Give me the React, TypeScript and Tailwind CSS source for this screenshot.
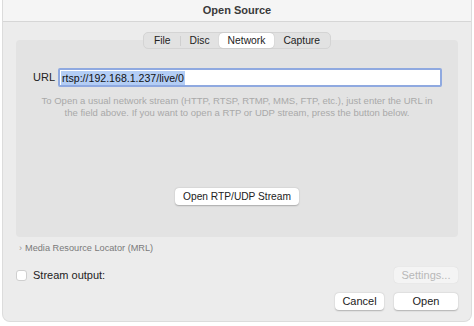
import React, { useState } from 'react';

const font = { fontFamily: '"Liberation Sans", Arial, sans-serif' };

function TabButton({ label, active, onClick }: { label: string; active: boolean; onClick: () => void }) {
  return (
    <button
      onClick={onClick}
      className={
        active
          ? 'h-[15px] px-[9px] rounded-[4px] bg-white text-[10.3px] leading-[15px] text-[#222] shadow-[0_0_1px_rgba(0,0,0,0.3)]'
          : 'h-[15px] px-[9px] text-[10.3px] leading-[15px] text-[#222]'
      }
    >
      {label}
    </button>
  );
}

export default function App() {
  const [tab, setTab] = useState('Network');
  const [url, setUrl] = useState('rtsp://192.168.1.237/live/0');
  const [streamOutput, setStreamOutput] = useState(false);

  return (
    <div className="w-[474px] h-[326px] bg-white" style={font}>
      <div className="mx-[2px] h-[322px] rounded-b-[8px] bg-[#ececec] border border-t-0 border-[#dcdcdc] flex flex-col overflow-hidden">
        {/* title bar */}
        <div className="h-[22px] bg-[#f5f5f5] border-b border-[#d6d6d6] flex items-center justify-center">
          <span className="text-[11px] font-bold text-[#3a3a3a]">Open Source</span>
        </div>

        <div className="relative px-[13px] pt-[18px]">
          {/* segmented tabs */}
          <div className="absolute left-0 right-0 top-[10px] flex justify-center">
            <div className="flex items-center h-[17px] px-px rounded-[5px] bg-[#e2e2e2] border border-[#d4d4d4]">
              {['File', 'Disc', 'Network', 'Capture'].map((t, i) => (
                <React.Fragment key={t}>
                  {i === 1 && <span className="w-px h-[10px] bg-[#cfcfcf]" />}
                  <TabButton label={t} active={tab === t} onClick={() => setTab(t)} />
                </React.Fragment>
              ))}
            </div>
          </div>

          {/* panel */}
          <div className="h-[197px] rounded-[4px] bg-[#e3e3e3] flex flex-col items-center pt-[28px]">
            <div className="flex items-center w-full pl-[17px] pr-[16px]">
              <span className="text-[11px] text-[#222] w-[25px]">URL</span>
              <div className="flex-1 h-[19px] bg-white border-[2px] border-[#8fa9e0] rounded-[2px] flex items-center px-px">
                <span className="text-[10.6px] leading-[14px] text-[#111] bg-[#b3cdf5] px-px">{url}</span>
                <input className="hidden" value={url} onChange={(e) => setUrl(e.target.value)} />
              </div>
            </div>
            <p className="mt-[8px] w-[400px] text-center text-[9.5px] leading-[12px] text-[#a9a9a9]">
              To Open a usual network stream (HTTP, RTSP, RTMP, MMS, FTP, etc.), just enter the URL in the field above. If you want to open a RTP or UDP stream, press the button below.
            </p>
            <button className="mt-[69px] h-[17px] px-[8px] rounded-[4px] bg-white text-[10.2px] leading-[17px] text-[#222] shadow-[0_0.5px_1.5px_rgba(0,0,0,0.25)]">
              Open RTP/UDP Stream
            </button>
          </div>

          {/* MRL disclosure */}
          <div className="mt-[5px] flex items-center gap-[3px] pl-[3px] h-[14px]">
            <span className="text-[9px] text-[#9a9a9a]">›</span>
            <span className="text-[9.2px] text-[#7a7a7a]">Media Resource Locator (MRL)</span>
          </div>

          {/* stream output */}
          <div className="mt-[11px] flex items-center justify-between">
            <label className="flex items-center gap-[6px] cursor-pointer">
              <input
                type="checkbox"
                checked={streamOutput}
                onChange={(e) => setStreamOutput(e.target.checked)}
                className="appearance-none w-[11px] h-[11px] rounded-[3px] bg-white border border-[#cfcfcf]"
              />
              <span className="text-[11px] text-[#222]">Stream output:</span>
            </label>
            <button disabled className="w-[64px] h-[16px] rounded-[4px] bg-[#f4f4f4] text-[11px] leading-[16px] text-[#b8b8b8] shadow-[0_0_1px_rgba(0,0,0,0.15)]">
              Settings...
            </button>
          </div>

          <div className="mt-[9px] flex justify-end gap-[10px]">
            <button className="w-[49px] h-[17px] rounded-[4px] bg-white text-[11px] leading-[17px] text-[#222] shadow-[0_0.5px_1.5px_rgba(0,0,0,0.25)]">
              Cancel
            </button>
            <button className="w-[64px] h-[17px] rounded-[4px] bg-white text-[11px] leading-[17px] text-[#222] shadow-[0_0.5px_1.5px_rgba(0,0,0,0.25)]">
              Open
            </button>
          </div>
        </div>
      </div>
    </div>
  );
}
